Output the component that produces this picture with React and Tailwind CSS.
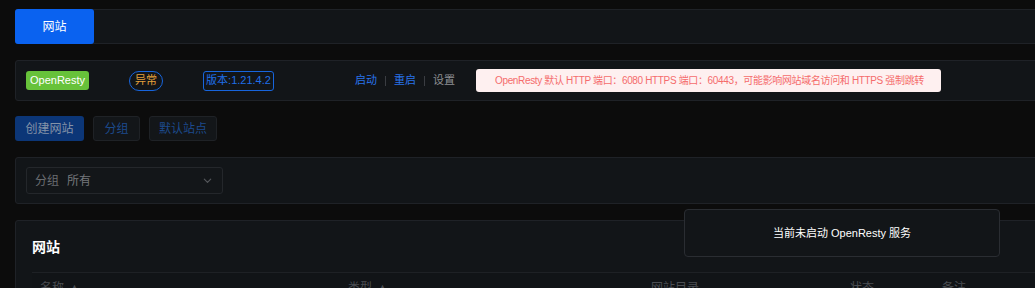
import React from 'react';

export default function App() {
  return (
    <div
      className="relative w-[1035px] h-[288px] overflow-hidden bg-[#0c0c0c] text-[12px]"
      style={{ fontFamily: '"Liberation Sans", "Noto Sans CJK SC", sans-serif' }}
    >
      <div className="w-[1060px] pl-[15px] pt-[9px]">
        {/* tabs */}
        <div className="h-[35px] flex items-stretch bg-[#121518] border border-[#1f2227] rounded-[3px]">
          <button type="button" className="w-[79px] -ml-px -my-px rounded-[3px] bg-[#0a62f0] text-white text-[12px]">
            网站
          </button>
        </div>

        {/* status bar */}
        <div className="mt-[16px] h-[41px] flex items-center pl-[10px] bg-[#121518] border border-[#1f2227] rounded-[3px]">
          <span className="h-[19px] w-[63px] flex items-center justify-center rounded-[3px] bg-[#67c23a] text-white text-[11px]">
            OpenResty
          </span>
          <span className="ml-[40px] h-[20px] w-[34px] flex items-center justify-center rounded-full border border-[#1765dd] text-[#e6a23c] text-[11px]">
            异常
          </span>
          <span className="ml-[40px] h-[20px] w-[71px] flex items-center justify-center rounded-[3px] border border-[#1765dd] text-[#1f6fe8] text-[11px]">
            版本:1.21.4.2
          </span>
          <div className="ml-[81px] flex items-center text-[11px]">
            <span className="text-[#2873ea]">启动</span>
            <span className="mx-[8px] h-[10px] w-px bg-[#3a3d42]" />
            <span className="text-[#2873ea]">重启</span>
            <span className="mx-[8px] h-[10px] w-px bg-[#3a3d42]" />
            <span className="text-[#8d8f93]">设置</span>
          </div>
          <div className="ml-[21px] h-[23px] w-[465px] flex items-center pl-[19px] rounded-[3px] bg-[#fef0f0] text-[#f56c6c] text-[10px] tracking-[-0.35px] whitespace-nowrap overflow-hidden">
            OpenResty 默认 HTTP 端口：6080 HTTPS 端口：60443，可能影响网站域名访问和 HTTPS 强制跳转
          </div>
        </div>

        {/* actions */}
        <div className="mt-[15px] flex gap-[9px]">
          <button type="button" className="h-[25px] w-[69px] rounded-[3px] bg-[#0c3677] text-[#8593a8] text-[12px]">
            创建网站
          </button>
          <button type="button" className="h-[25px] w-[47px] rounded-[3px] bg-[#131619] border border-[#1f2226] text-[#1c4a8c] text-[12px]">
            分组
          </button>
          <button type="button" className="h-[25px] w-[68px] rounded-[3px] bg-[#131619] border border-[#1f2226] text-[#1c4a8c] text-[12px]">
            默认站点
          </button>
        </div>

        {/* filter */}
        <div className="mt-[16px] h-[47px] flex items-center pl-[10px] bg-[#121518] border border-[#1f2227] rounded-[3px]">
          <div className="h-[27px] w-[197px] flex items-center px-[8px] border border-[#24272b] rounded-[3px] bg-[#131619]">
            <span className="text-[#6a6d71] text-[12px]">分组</span>
            <span className="ml-[8px] text-[#75787c] text-[12px]">所有</span>
            <svg className="ml-auto mr-[1px] w-[11px] h-[11px] text-[#55585c]" viewBox="0 0 24 24" fill="none">
              <path d="M5 9l7 7 7-7" stroke="currentColor" strokeWidth="2.5" strokeLinecap="round" strokeLinejoin="round" />
            </svg>
          </div>
        </div>

        {/* sites card */}
        <div className="mt-[16px] h-[100px] pl-[16px] pt-[16px] bg-[#121518] border border-[#1f2227] rounded-[3px]">
          <div className="text-[14px] font-bold text-white leading-[20px]">网站</div>
          <div className="mt-[15px] border-t border-[#1e2125] bg-[#111417] h-[40px] flex items-start pt-[6px] text-[12px] text-[#4a4d52]">
            <span className="ml-[8px] w-[308px] flex items-center gap-[6px]">
              名称 <span className="text-[9px]">▲</span>
            </span>
            <span className="w-[303px] flex items-center gap-[6px]">
              类型 <span className="text-[9px]">▲</span>
            </span>
            <span className="w-[199px]">网站目录</span>
            <span className="w-[92px]">状态</span>
            <span>备注</span>
          </div>
        </div>
      </div>

      {/* toast */}
      <div className="absolute left-[684px] top-[209px] w-[316px] h-[48px] flex items-center justify-center bg-[#121518] border border-[#2a2d32] rounded-[4px] text-white text-[11px]">
        当前未启动 OpenResty 服务
      </div>
    </div>
  );
}
